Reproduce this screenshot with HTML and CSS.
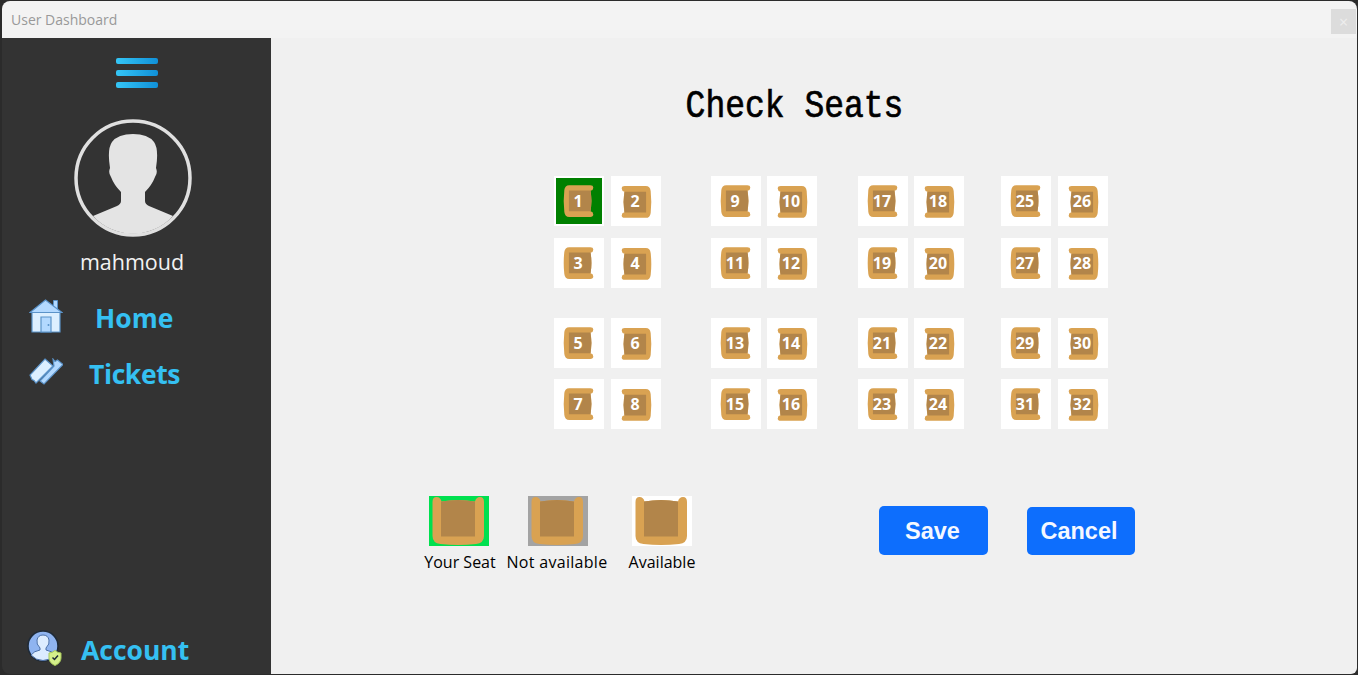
FILE: index.html
```html
<!DOCTYPE html>
<html lang="en">
<head>
    <meta charset="UTF-8">
    <meta name="viewport" content="width=device-width, initial-scale=1.0">
    <title>User Dashboard</title>
    <link rel="stylesheet" href="styles.css">
</head>
<body>

    <!-- Shared chair drawing, rotated for the seat map -->
    <svg class="defs" width="0" height="0">
        <symbol id="chair" viewBox="0 0 60 50">
            <path fill="#d9a252" d="M3.500 6 Q3.500 1 7.500 1 Q11.500 1 12.500 5.500 Q29 2.500 46 5.500 Q47 1 51 1 Q55 1 55 6 V40 Q55 47 47 48 Q29 50 11.500 48 Q3.500 47 3.500 40 Z"/>
            <path fill="#b2854a" d="M12 5.500 Q29 2.500 46 5.500 V40.500 H12 Z"/>
        </symbol>
    </svg>

    <div class="window">
        <header class="title-bar">
            <span class="title-text">User Dashboard</span>
            <button class="close-btn" type="button">&times;</button>
        </header>

        <div class="app">
            <aside class="sidebar">
                <div class="menu-icon"><span></span><span></span><span></span></div>

                <svg class="avatar" width="118" height="118" viewBox="0 0 118 118">
                    <circle cx="59" cy="59" r="57" fill="none" stroke="#e0e0e0" stroke-width="3.500"/>
                    <path fill="#e4e4e4" d="M19 97 L43 87 Q47 85 47 82 V73 Q40 66 37 58 Q34 54 36 49 Q33 30 38 23 Q44 15 59 15 Q74 15 80 23 Q85 30 82 49 Q84 54 81 58 Q78 66 71 73 V82 Q71 85 75 87 L99 97 A54 54 0 0 1 19 97 Z"/>
                </svg>
                <div class="username">mahmoud</div>

                <nav class="nav">
                    <a class="nav-item nav-home" href="#">
                        <svg class="nav-icon" width="34" height="34" viewBox="0 0 34 34">
                            <path fill="#b3d9ff" stroke="#5b93c9" d="M24.500 1.500 H28.500 V10 H24.500 Z"/>
                            <path fill="#dcefff" stroke="#5b93c9" stroke-width="1.200" d="M3 13 H31 V33 H3 Z"/>
                            <path fill="#b3d9ff" stroke="#5b93c9" stroke-width="1.200" d="M16.500 1 L33 13.500 H1 Z"/>
                            <path fill="#b3d9ff" stroke="#5b93c9" stroke-width="1.200" d="M12 18 H22 V33 H12 Z"/>
                            <circle cx="19.500" cy="26" r="1" fill="#5b93c9"/>
                        </svg>
                        <span>Home</span>
                    </a>
                    <a class="nav-item nav-tickets" href="#">
                        <svg class="nav-icon" width="34" height="28" viewBox="0 0 34 28">
                            <path fill="#b3d9ff" stroke="#5b93c9" stroke-width="1.200" d="M24 1 L26 3.500 L28.500 2 L34 6.500 L15 26 L11 23 L25 8 Z"/>
                            <path fill="#dcefff" stroke="#5b93c9" stroke-width="1.200" d="M16 1 L24 8 L7 25 L5 22.500 L3 21.500 L1 17 Z"/>
                        </svg>
                        <span>Tickets</span>
                    </a>
                </nav>

                <a class="nav-item nav-account" href="#">
                    <svg class="nav-icon" width="36" height="36" viewBox="0 0 36 36">
                        <circle cx="16" cy="16" r="15" fill="#8fb4f0" stroke="#1e2a38" stroke-width="1.500"/>
                        <path fill="#dcecff" stroke="#4a6fa8" d="M4 25 Q7 21 13 20 V18 Q9 14 10 10 Q11 5 16 5 Q21 5 22 10 Q23 14 19 18 V20 Q25 21 28 25 Q23 30.500 16 30.500 Q9 30.500 4 25 Z"/>
                        <path fill="#d5f08a" stroke="#a7c95a" d="M22 23 Q25 23 28 20.500 Q31 23 34 23 V28 Q34 33 28 35.500 Q22 33 22 28 Z"/>
                        <path fill="none" stroke="#1e2a38" stroke-width="1.500" d="M25.500 27.500 L27.500 29.500 L31 25.500"/>
                    </svg>
                    <span>Account</span>
                </a>
            </aside>

            <main class="content">
                <h1 class="page-title">Check Seats</h1>

                <div class="seat-map">
                    <div class="seat-group">
                        <div class="seat picked"><svg class="chair"><use href="#chair"/></svg><span>1</span></div>
                        <div class="seat"><svg class="chair"><use href="#chair"/></svg><span>2</span></div>
                        <div class="seat"><svg class="chair"><use href="#chair"/></svg><span>3</span></div>
                        <div class="seat"><svg class="chair"><use href="#chair"/></svg><span>4</span></div>
                        <div class="seat"><svg class="chair"><use href="#chair"/></svg><span>5</span></div>
                        <div class="seat"><svg class="chair"><use href="#chair"/></svg><span>6</span></div>
                        <div class="seat"><svg class="chair"><use href="#chair"/></svg><span>7</span></div>
                        <div class="seat"><svg class="chair"><use href="#chair"/></svg><span>8</span></div>
                    </div>
                    <div class="seat-group">
                        <div class="seat"><svg class="chair"><use href="#chair"/></svg><span>9</span></div>
                        <div class="seat"><svg class="chair"><use href="#chair"/></svg><span>10</span></div>
                        <div class="seat"><svg class="chair"><use href="#chair"/></svg><span>11</span></div>
                        <div class="seat"><svg class="chair"><use href="#chair"/></svg><span>12</span></div>
                        <div class="seat"><svg class="chair"><use href="#chair"/></svg><span>13</span></div>
                        <div class="seat"><svg class="chair"><use href="#chair"/></svg><span>14</span></div>
                        <div class="seat"><svg class="chair"><use href="#chair"/></svg><span>15</span></div>
                        <div class="seat"><svg class="chair"><use href="#chair"/></svg><span>16</span></div>
                    </div>
                    <div class="seat-group">
                        <div class="seat"><svg class="chair"><use href="#chair"/></svg><span>17</span></div>
                        <div class="seat"><svg class="chair"><use href="#chair"/></svg><span>18</span></div>
                        <div class="seat"><svg class="chair"><use href="#chair"/></svg><span>19</span></div>
                        <div class="seat"><svg class="chair"><use href="#chair"/></svg><span>20</span></div>
                        <div class="seat"><svg class="chair"><use href="#chair"/></svg><span>21</span></div>
                        <div class="seat"><svg class="chair"><use href="#chair"/></svg><span>22</span></div>
                        <div class="seat"><svg class="chair"><use href="#chair"/></svg><span>23</span></div>
                        <div class="seat"><svg class="chair"><use href="#chair"/></svg><span>24</span></div>
                    </div>
                    <div class="seat-group">
                        <div class="seat"><svg class="chair"><use href="#chair"/></svg><span>25</span></div>
                        <div class="seat"><svg class="chair"><use href="#chair"/></svg><span>26</span></div>
                        <div class="seat"><svg class="chair"><use href="#chair"/></svg><span>27</span></div>
                        <div class="seat"><svg class="chair"><use href="#chair"/></svg><span>28</span></div>
                        <div class="seat"><svg class="chair"><use href="#chair"/></svg><span>29</span></div>
                        <div class="seat"><svg class="chair"><use href="#chair"/></svg><span>30</span></div>
                        <div class="seat"><svg class="chair"><use href="#chair"/></svg><span>31</span></div>
                        <div class="seat"><svg class="chair"><use href="#chair"/></svg><span>32</span></div>
                    </div>
                </div>

                <div class="bottom-row">
                    <div class="legend">
                        <div class="legend-item item-yours">
                            <svg class="legend-chair yours"><use href="#chair"/></svg>
                            <span>Your Seat</span>
                        </div>
                        <div class="legend-item item-taken">
                            <svg class="legend-chair taken"><use href="#chair"/></svg>
                            <span>Not available</span>
                        </div>
                        <div class="legend-item item-free">
                            <svg class="legend-chair free"><use href="#chair"/></svg>
                            <span>Available</span>
                        </div>
                    </div>

                    <div class="actions">
                        <button class="btn btn-save" type="button">Save</button>
                        <button class="btn btn-cancel" type="button">Cancel</button>
                    </div>
                </div>
            </main>
        </div>
    </div>

</body>
</html>
```

FILE: styles.css
```css
* {
    margin: 0;
    padding: 0;
    box-sizing: border-box;
}

html, body {
    height: 100%;
    overflow: hidden;
}

body {
    background-color: #2b2b2b;
    font-family: 'Open Sans', sans-serif;
}

.defs {
    display: block;
    height: 0;
}

.window {
    height: 675px;
    display: flex;
    flex-direction: column;
    margin: 0 1px 0 2px;
    padding: 1px 0;
}

/* Title bar */
.title-bar {
    height: 37px;
    flex: none;
    display: flex;
    align-items: center;
    justify-content: space-between;
    padding: 0 1px 0 9px;
    background-color: #f3f3f3;
    border-radius: 8px 8px 0 0;
}

.title-text {
    font-size: 14px;
    color: #999;
}

.close-btn {
    width: 25px;
    height: 25px;
    margin-top: 4px;
    border: none;
    background-color: #dcdcdc;
    color: #eee;
    font-size: 16px;
    font-family: 'Open Sans', sans-serif;
}

.app {
    flex: 1;
    display: flex;
    min-height: 0;
}

/* Sidebar */
.sidebar {
    width: 269px;
    flex: none;
    display: flex;
    flex-direction: column;
    background-color: #333;
    border-radius: 0 0 0 8px;
}

.menu-icon {
    display: flex;
    flex-direction: column;
    gap: 6px;
    width: 42px;
    margin: 20px 0 0 114px;
}

.menu-icon span {
    height: 6px;
    border-radius: 2px;
    background: linear-gradient(90deg, #35c6f6, #1090d8);
}

.avatar {
    display: block;
    margin: 31px 0 0 72px;
}

.username {
    margin-top: 10px;
    width: 260px;
    text-align: center;
    font-size: 21.500px;
    line-height: 29px;
    color: #f2f2f2;
}

.nav {
    display: flex;
    flex-direction: column;
    gap: 20px;
    margin-top: 24px;
}

.nav-item {
    display: flex;
    align-items: center;
    height: 36px;
    padding-left: 27px;
    font-size: 26.500px;
    font-weight: 700;
    color: #35c0f2;
    text-decoration: none;
}

.nav-icon {
    flex: none;
    margin-bottom: 4px;
}

.nav-home span {
    margin-left: 32px;
}

.nav-tickets span {
    margin-left: 26px;
    letter-spacing: -0.4px;
}

.nav-account {
    margin-top: auto;
    margin-bottom: 6px;
    padding-left: 25px;
}

.nav-account .nav-icon {
    margin-bottom: 4px;
}

.nav-account span {
    margin-left: 18px;
}

/* Main area */
.content {
    flex: 1;
    min-width: 0;
    background-color: #f0f0f0;
    border-radius: 0 0 6px 0;
    padding-top: 47px;
}

.page-title {
    width: 1047px;
    text-align: center;
    font-family: 'Liberation Mono', monospace;
    font-size: 33px;
    line-height: 46px;
    font-weight: 400;
    color: #000;
    -webkit-text-stroke: 0.6px #000;
    transform: scaleY(1.18);
}

/* Seat map */
.seat-map {
    display: flex;
    margin: 45px 0 0 283px;
}

.seat-group {
    display: grid;
    grid-template-columns: 50px 50px;
    grid-template-rows: 62px 80px 61px 50px;
    column-gap: 6px;
}

.seat-group:nth-child(1) {
    column-gap: 7px;
    margin-right: 50px;
}

.seat-group:nth-child(2) {
    margin-right: 41px;
}

.seat-group:nth-child(3) {
    margin-right: 37px;
}

.seat-group:nth-child(4) {
    column-gap: 7px;
}

.seat {
    width: 50px;
    height: 50px;
    display: grid;
    place-items: center;
    background-color: #fff;
    color: #fff;
    font-size: 16px;
    font-weight: 700;
}

.seat > * {
    grid-area: 1 / 1;
}

/* rotated chair makes its own stacking context, keep the number above it */
.seat span {
    z-index: 1;
    padding-right: 2px;
}

.seat.picked {
    border: 2px solid #fff;
    background-color: #008000;
}

.chair {
    width: 37px;
    height: 31px;
    margin-right: 1px;
    transform: rotate(90deg);
}

.seat:nth-child(even) .chair {
    margin-right: 0;
    transform: rotate(-90deg);
}

/* Legend and buttons */
.bottom-row {
    display: flex;
    align-items: flex-start;
    margin: 67px 0 0 153px;
}

.legend {
    display: flex;
}

.legend-item {
    display: flex;
    flex-direction: column;
    align-items: center;
    font-size: 16px;
    line-height: 22px;
    color: #000;
    white-space: nowrap;
}

.item-yours {
    width: 72px;
}

.item-yours .legend-chair {
    margin-right: 2px;
}

.item-taken {
    width: 100px;
    margin-left: 11px;
    letter-spacing: 0.3px;
}

.item-taken .legend-chair {
    margin-left: 2px;
}

.item-free {
    width: 68px;
    margin-left: 21px;
}

.legend-chair {
    width: 60px;
    height: 50px;
    margin-bottom: 5px;
}

.legend-chair.yours {
    background-color: #00e04f;
}

.legend-chair.taken {
    background-color: #a3a3a3;
}

.legend-chair.free {
    background-color: #fff;
}

.actions {
    display: flex;
    align-items: flex-end;
    gap: 39px;
    margin: 10px 0 0 183px;
}

.btn {
    width: 109px;
    height: 49px;
    border: none;
    border-radius: 5px;
    background-color: #0d6efd;
    color: #f4f8ff;
    font-family: 'Liberation Sans', sans-serif;
    font-size: 23.500px;
    font-weight: 700;
}

.btn-save {
    padding: 2px 2px 0 0;
}

.btn-cancel {
    width: 108px;
    height: 48px;
    padding-right: 4px;
}
```
